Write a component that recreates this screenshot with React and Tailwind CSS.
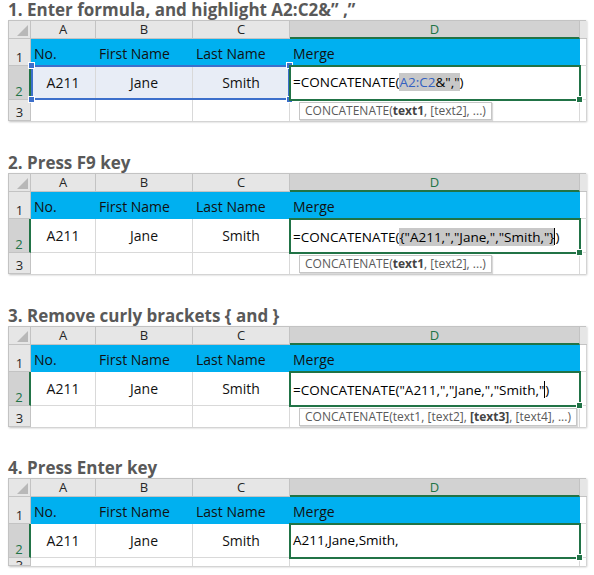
const font = { fontFamily: '"Open Sans", "Liberation Sans", sans-serif' };

const blueRow = ['No.', 'First Name', 'Last Name', 'Merge'];

function Corner() {
  return (
    <div className="bg-[#e6e6e6] border-r border-b border-[#c3c3c3] relative">
      <svg className="absolute right-[2px] bottom-[2px]" width="11" height="11" viewBox="0 0 11 11">
        <polygon points="11,0 11,11 0,11" fill="#b8b8b8" />
      </svg>
    </div>
  );
}

function ColHead({ label, active }) {
  return active ? (
    <div className="bg-[#d2d2d2] border-r border-[#c3c3c3] border-b-2 border-b-[#217346] text-[#217346] text-[13px] flex items-center justify-center leading-none">
      {label}
    </div>
  ) : (
    <div className="bg-[#e6e6e6] border-r border-b border-[#c3c3c3] text-[#262626] text-[13px] flex items-center justify-center leading-none">
      {label}
    </div>
  );
}

function RowHead({ n, active, top }) {
  const base = 'text-[13px] flex justify-center leading-none overflow-hidden ';
  const place = top ? 'items-start pt-[1px] ' : 'items-end pb-[1px] ';
  return active ? (
    <div className={base + place + 'bg-[#d2d2d2] border-b border-[#c3c3c3] border-r-2 border-r-[#217346] text-[#217346]'}>
      {n}
    </div>
  ) : (
    <div className={base + place + 'bg-[#e6e6e6] border-b border-r border-[#c3c3c3] text-[#262626]'}>
      {n}
    </div>
  );
}

function Caret() {
  return <span className="inline-block w-px h-[17px] bg-black align-[-3px]" />;
}

function Tooltip({ children }) {
  return (
    <div className="absolute left-[9px] top-[calc(100%+2px)] z-20 bg-white border border-[#c6c6c6] shadow-[1px_1px_1px_rgba(0,0,0,0.15)] px-[5px] h-[18px] flex items-center text-[12px] text-[#5a5a5a] whitespace-pre">
      {children}
    </div>
  );
}

function Handle({ className }) {
  return <div className={`absolute w-[5px] h-[5px] bg-[#3c6fcb] border border-white box-content ${className}`} />;
}

function Sheet({ title, highlight, formula, tooltip, lastRow = 21 }) {
  return (
    <div className="flex flex-col">
      <div className="relative z-10 h-[20px] pl-[8px] text-[17px] font-bold text-[#595959] leading-[20px] whitespace-nowrap">
        {title}
      </div>
      <div
        className="ml-[8px] w-[578px] grid grid-cols-[22px_65px_97px_97px_290px_7px] border-l border-t border-[#c3c3c3] shadow-[1px_1px_2px_rgba(0,0,0,0.25)]"
        style={{ gridTemplateRows: `18px 27px 34px ${lastRow}px` }}
      >
        <Corner />
        <ColHead label="A" />
        <ColHead label="B" />
        <ColHead label="C" />
        <ColHead label="D" active />
        <div className="bg-[#e6e6e6] border-b border-[#c3c3c3]" />

        <RowHead n="1" />
        {blueRow.map(t => (
          <div key={t} className="bg-[#00b0f0] text-[14px] text-[#111] pl-[3px] flex items-center leading-none pt-[2px]">
            {t}
          </div>
        ))}
        <div className="border-b border-[#dadada]" />

        <RowHead n="2" active />
        <div className="col-span-3 relative grid grid-cols-[65px_97px_97px]">
          {['A211', 'Jane', 'Smith'].map(t => (
            <div key={t} className={`${highlight ? 'bg-[#e8edf6]' : 'bg-white'} border-r border-b border-[#d9d9d9] text-[14px] text-[#111] flex items-center justify-center leading-none`}>
              {t}
            </div>
          ))}
          {highlight && (
            <>
              <div className="absolute left-0 right-0 -top-px bottom-0 border-2 border-[#3c6fcb]" />
              <Handle className="-left-[3px] -top-[4px]" />
              <Handle className="-right-[3px] -top-[4px]" />
              <Handle className="-left-[3px] -bottom-[3px]" />
              <Handle className="-right-[3px] -bottom-[3px]" />
            </>
          )}
        </div>
        <div className="relative bg-white flex items-center pl-[3px] text-[13.5px] text-black leading-none whitespace-nowrap">
          <div className="absolute -left-px -top-px -right-px -bottom-px border-2 border-[#217346]" />
          <div className="absolute -right-[3px] -bottom-[3px] w-[5px] h-[5px] bg-[#217346] border border-white box-content z-10" />
          <span className="relative">{formula}</span>
          {tooltip && <Tooltip>{tooltip}</Tooltip>}
        </div>
        <div className="border-b border-[#dadada]" />

        <RowHead n="3" top={lastRow < 15} />
        <div className="border-r border-[#d9d9d9]" />
        <div className="border-r border-[#d9d9d9]" />
        <div className="border-r border-[#d9d9d9]" />
        <div className="border-r border-[#d9d9d9]" />
        <div />
      </div>
    </div>
  );
}

export default function App() {
  return (
    <div className="w-[594px] h-[575px] bg-white overflow-hidden" style={font}>
      <Sheet
        title="1. Enter formula, and highlight A2:C2&” ,”"
        highlight
        formula={
          <>
            =CONCATENATE(<span className="bg-[#c8c8c8]"><span className="text-[#3461c1]">A2:C2</span>&amp;","</span>)
          </>
        }
        tooltip={<>CONCATENATE(<b className="text-[#444]">text1</b>{', [text2], ...)'}</>}
      />
      <div className="h-[32px]" />
      <Sheet
        title="2. Press F9 key"
        formula={
          <>
            =CONCATENATE(<span className="bg-[#c8c8c8]">{'{"A211,","Jane,","Smith,"}'}</span><Caret />)
          </>
        }
        tooltip={<>CONCATENATE(<b className="text-[#444]">text1</b>{', [text2], ...)'}</>}
      />
      <div className="h-[32px]" />
      <Sheet
        title="3. Remove curly brackets { and }"
        formula={
          <>
            =CONCATENATE("A211,","Jane,","Smith,"<Caret />)
          </>
        }
        tooltip={<>{'CONCATENATE(text1, [text2], '}<b className="text-[#444]">[text3]</b>{', [text4], ...)'}</>}
      />
      <div className="h-[31px]" />
      <Sheet
        title="4. Press Enter key"
        formula="A211,Jane,Smith,"
        lastRow={8}
      />
    </div>
  );
}
